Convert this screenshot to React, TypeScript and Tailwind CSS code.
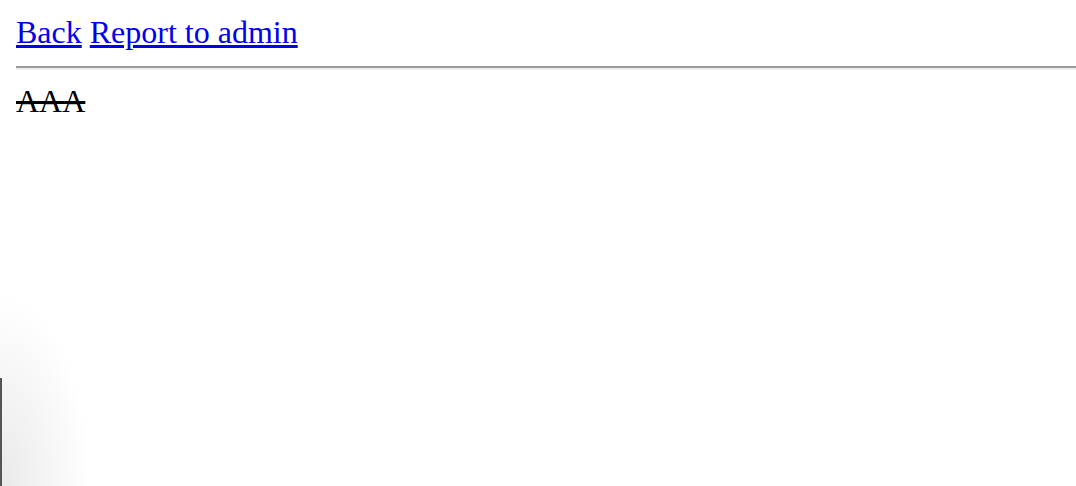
export default function App() {
  return (
    <div className="relative min-h-[486px] w-full overflow-hidden bg-white pt-4 font-['Liberation_Serif',serif] text-[32px] leading-[32px] text-black">
      <div className="px-4">
        <a href="#" className="text-[#0000ee] underline">
          Back
        </a>{' '}
        <a href="#" className="text-[#0000ee] underline">
          Report to admin
        </a>
      </div>
      <hr className="ml-4 mt-[18px] border-0 border-t-2 border-b-2 border-t-[#9a9a9a] border-b-[#eeeeee]" />
      <div className="mt-[15px] px-4">
        <s>AAA</s>
      </div>

      <div className="pointer-events-none absolute bottom-0 left-0 h-[190px] w-[90px] bg-[radial-gradient(ellipse_90px_190px_at_0%_100%,#e9e9e9,rgba(255,255,255,0))]" />
      <div className="pointer-events-none absolute bottom-0 left-0 h-[108px] w-[2px] bg-[#555]" />
    </div>
  )
}
